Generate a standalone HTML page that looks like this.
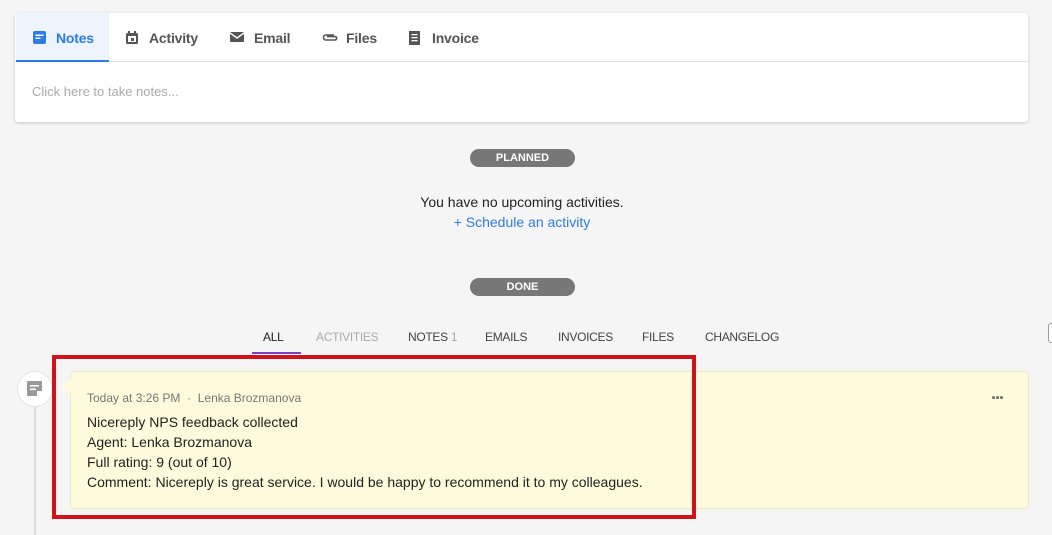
<!DOCTYPE html>
<html><head><style>
body{margin:0;width:1052px;height:535px;background:#f5f5f5;font-family:"Liberation Sans",sans-serif;position:relative;overflow:hidden;color:#222}
.card{position:absolute;left:15px;top:13px;width:1013px;height:109px;background:#fff;border-radius:3px;box-shadow:0 1px 3px rgba(0,0,0,.2)}
.tabs{height:48px;border-bottom:1px solid #ddd;position:relative}
.tab{position:absolute;top:0;height:48px;line-height:50px;font-size:14px;font-weight:bold;color:#555;letter-spacing:-0.2px}
.tab svg{position:absolute;top:17px;left:0}
.notes{left:1px;width:93px;background:#edf4fd;color:#2d7be5;border-bottom:2px solid #2d7be5;height:47px}
.ph{position:absolute;left:17px;top:71px;font-size:13px;color:#aaa}
.pill{position:absolute;left:470px;width:105px;height:18px;border-radius:9px;background:#777;color:#fff;font-size:11px;font-weight:bold;text-align:center;line-height:18px}
.ft{position:absolute;top:330px;font-size:12px;color:#444;letter-spacing:-0.3px}
</style></head><body>
<div class="card">
 <div class="tabs">
  <div class="tab notes"><svg style="left:16px" width="15" height="15"><rect x="1" y="1" width="13" height="13" rx="2" fill="#2d7be5"/><rect x="3.5" y="4.5" width="8" height="1.5" fill="#fff"/><rect x="3.5" y="7.5" width="5" height="1.5" fill="#fff"/></svg><span style="position:absolute;left:40px">Notes</span></div>
  <div class="tab" style="left:110px"><svg width="14" height="15"><rect x="1" y="3" width="12" height="11" rx="1.5" fill="#555"/><rect x="3" y="1" width="2" height="3" fill="#555"/><rect x="9" y="1" width="2" height="3" fill="#555"/><rect x="3" y="6" width="8" height="6" fill="#fff"/><rect x="6" y="8" width="3" height="3" fill="#555"/></svg><span style="position:absolute;left:24px;white-space:nowrap">Activity</span></div>
  <div class="tab" style="left:215px"><svg width="15" height="14"><rect x="0" y="2" width="14" height="10" rx="1" fill="#555"/><path d="M0 3 L7 8 L14 3" stroke="#fff" stroke-width="1.4" fill="none"/></svg><span style="position:absolute;left:24px">Email</span></div>
  <div class="tab" style="left:306px"><svg width="18" height="14"><path d="M13 5 H5 a2.5 2.5 0 0 0 0 5 H14 a1.7 1.7 0 0 0 0-3.4 H6" stroke="#555" stroke-width="1.6" fill="none"/></svg><span style="position:absolute;left:25px">Files</span></div>
  <div class="tab" style="left:393px"><svg width="14" height="16"><rect x="1" y="1" width="11" height="14" fill="#555"/><rect x="3.5" y="4" width="6" height="1.3" fill="#fff"/><rect x="3.5" y="7" width="6" height="1.3" fill="#fff"/><rect x="3.5" y="10" width="6" height="1.3" fill="#fff"/></svg><span style="position:absolute;left:24px">Invoice</span></div>
 </div>
 <div class="ph">Click here to take notes...</div>
</div>
<div class="pill" style="top:149px">PLANNED</div>
<div style="position:absolute;left:0;width:1044px;top:192px;text-align:center;font-size:14px;line-height:20px">You have no upcoming activities.<br><span style="color:#2d7be5">+ Schedule an activity</span></div>
<div class="pill" style="top:278px">DONE</div>
<div class="ft" style="left:263px;color:#222">ALL</div>
<div style="position:absolute;left:252px;top:352px;width:49px;height:2px;background:#7b3fc4"></div>
<div class="ft" style="left:316px;color:#aaa">ACTIVITIES</div>
<div class="ft" style="left:408px">NOTES <span style="color:#aaa">1</span></div>
<div class="ft" style="left:485px">EMAILS</div>
<div class="ft" style="left:558px">INVOICES</div>
<div class="ft" style="left:642px">FILES</div>
<div class="ft" style="left:705px">CHANGELOG</div>
<div style="position:absolute;left:34px;top:400px;width:2px;height:135px;background:#ddd"></div>
<div style="position:absolute;left:17px;top:371px;width:34px;height:34px;border-radius:50%;background:#fff;border:1px solid #e3e3e3"></div>
<svg style="position:absolute;left:26px;top:380px" width="17" height="17"><path d="M2 1 H15 a1 1 0 0 1 1 1 V11 L11 16 H2 a1 1 0 0 1-1-1 V2 a1 1 0 0 1 1-1z" fill="#999"/><rect x="4" y="5" width="9" height="1.6" fill="#fff"/><rect x="4" y="8.5" width="6" height="1.6" fill="#fff"/><path d="M11 16 V11 H16" fill="#fff"/></svg>
<div style="position:absolute;left:70px;top:371px;width:957px;height:136px;background:#fdfbdb;border:1px solid #ebe8c8;border-radius:3px"></div>
<div style="position:absolute;left:52px;top:355px;width:636px;height:156px;border:4px solid #d0121b"></div>
<div style="position:absolute;left:64px;top:381px;width:11px;height:11px;background:#fdfbdb;transform:rotate(45deg)"></div>
<div style="position:absolute;left:87px;top:391px;font-size:12px;color:#777">Today at 3:26 PM &nbsp;·&nbsp; Lenka Brozmanova</div>
<div style="position:absolute;left:87px;top:412px;font-size:14px;line-height:20px;color:#222">Nicereply NPS feedback collected<br>Agent: Lenka Brozmanova<br>Full rating: 9 (out of 10)<br>Comment: Nicereply is great service. I would be happy to recommend it to my colleagues.</div>
<div style="position:absolute;left:991px;top:388px;font-size:18px;font-weight:bold;color:#666;letter-spacing:-2px">···</div>
<div style="position:absolute;left:1048px;top:323px;width:6px;height:18px;border:1px solid #999;border-radius:3px;background:#fff"></div>
</body></html>
